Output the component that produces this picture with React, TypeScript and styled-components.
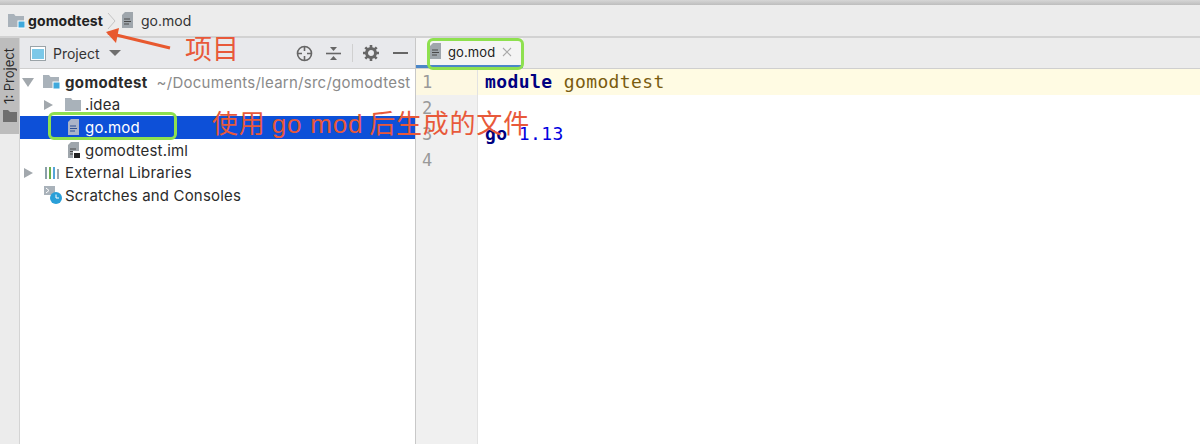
import React from "react";
import styled, { createGlobalStyle } from "styled-components";

const Global = createGlobalStyle`
  html, body { margin: 0; padding: 0; background: #fff; }
  #root { width: 1200px; height: 444px; overflow: hidden; }
`;
const UI = `"Inter", "Liberation Sans", "Noto Sans CJK SC", sans-serif`;
const MONO = `"DejaVu Sans Mono", "Liberation Mono", monospace`;

const Page = styled.div`
  position: relative; width: 1200px; height: 444px; overflow: hidden;
  display: flex; flex-direction: column; font-family: ${UI}; color: #222; background: #fff;
`;
const TopStrip = styled.div`
  height: 5px; flex: none; background: linear-gradient(#d6d6d6, #bdbdbd);
`;
const NavBar = styled.div`
  height: 33px; flex: none; box-sizing: border-box; padding-left: 8px; background: #ececec;
  border-bottom: 2px solid #d2d2d2; display: flex; align-items: center; font-size: 14px;
`;
const NavProject = styled.span`font-weight: 700; margin-left: 3px; letter-spacing: .1px;`;
const NavChevron = styled.svg`margin-left: 4px;`;
const NavFileIcon = styled.span`margin-left: 4px; display: flex;`;
const NavFile = styled.span`margin-left: 7px; color: #333;`;
const Body = styled.div`flex: 1; display: flex; min-height: 0;`;
const SideStrip = styled.div`
  width: 20px; flex: none; background: #ececec; border-right: 1px solid #d4d4d4; box-sizing: border-box;
`;
const SideTab = styled.div`
  height: 96px; background: #bdbdbd; display: flex; flex-direction: column; align-items: center; padding-top: 10px; box-sizing: border-box;
`;
const SideLabel = styled.span`
  writing-mode: vertical-rl; transform: rotate(180deg); font-size: 13px; color: #2a2a2a; line-height: 19px; white-space: nowrap;
`;
const SideIcon = styled.div`margin-top: 6px; height: 12px; display: flex;`;
const ProjectPanel = styled.div`
  width: 396px; flex: none; display: flex; flex-direction: column; border-right: 1px solid #c8c8c8; box-sizing: border-box;
`;
const PanelHeader = styled.div`
  height: 31px; flex: none; box-sizing: border-box; padding: 0 0 0 10px; display: flex; align-items: center;
  background: #e8e9ec; border-bottom: 1px solid #cfcfcf; font-size: 14px; color: #333;
`;
const PanelTitle = styled.span`margin-left: 7px; font-size: 14px;`;
const Caret = styled.span`
  margin-left: 9px; width: 0; height: 0; border-left: 6px solid transparent; border-right: 6px solid transparent; border-top: 6px solid #6e6e6e;
`;
const HeaderTools = styled.div`margin-left: auto; display: flex; align-items: center;`;
const ToolButton = styled.span<{ $w: number }>`width: ${(p) => p.$w}px; display: flex; justify-content: center; align-items: center;`;
const ToolDivider = styled.span`width: 1px; height: 18px; background: #d0d0d0; margin: 0 4px 0 2px;`;
const Tree = styled.div`padding-top: 2px; display: flex; flex-direction: column;`;
const Row = styled.div<{ $indent: number; $selected?: boolean }>`
  height: 22.6px; display: flex; align-items: center; font-size: 15px; white-space: nowrap;
  padding-left: ${(p) => p.$indent}px;
  background: ${(p) => (p.$selected ? "#0d50d8" : "transparent")};
  color: ${(p) => (p.$selected ? "#fff" : "#2b2b2b")};
`;
const Arrow = styled.span<{ $open?: boolean }>`
  width: 0; height: 0; flex: none;
  ${(p) => p.$open
    ? "border-left:6px solid transparent;border-right:6px solid transparent;border-top:9px solid #a2a8ad;margin-left:-2px;margin-right:9px;"
    : "border-top:5px solid transparent;border-bottom:5px solid transparent;border-left:9px solid #a2a8ad;margin-right:12px;"}
`;
const RowLabel = styled.span<{ $bold?: boolean; $gap?: number }>`
  margin-left: ${(p) => p.$gap ?? 3}px; font-weight: ${(p) => (p.$bold ? 700 : 400)}; letter-spacing: ${(p) => (p.$bold ? ".35px" : ".18px")};
`;
const RowHint = styled.span`margin-left: 9px; color: #8a8a8a; letter-spacing: .26px;`;
const Editor = styled.div`flex: 1; display: flex; flex-direction: column; min-width: 0;`;
const TabBar = styled.div`
  height: 31px; flex: none; box-sizing: border-box; background: #ececec; border-bottom: 1px solid #cfcfcf; display: flex;
`;
const Tab = styled.div`
  width: 107px; height: 30px; background: #f4f4f4; border-bottom: 3px solid #4a86c8; box-sizing: border-box; display: flex; align-items: center; font-size: 13px; padding-left: 13px; color: #222;
`;
const TabText = styled.span`margin-left: 6px; letter-spacing: .1px;`;
const Close = styled.span`display: flex; margin-left: 7px;`;
const Code = styled.div`flex: 1; display: flex; min-height: 0; font-family: ${MONO}; font-size: 18px; letter-spacing: .4px;`;
const Gutter = styled.div`
  width: 62px; flex: none; background: #f0f0f0; border-right: 1px solid #e2e2e2; box-sizing: border-box; color: #999; font-size: 17px; letter-spacing: 0;
`;
const GutterLine = styled.div<{ $active?: boolean }>`
  height: 26px; line-height: 26px; padding-left: 6px; background: ${(p) => (p.$active ? "#fdf8e2" : "transparent")};
`;
const Lines = styled.div`flex: 1;`;
const Line = styled.div<{ $active?: boolean }>`
  height: 26px; line-height: 26px; padding-left: 7px; white-space: pre; background: ${(p) => (p.$active ? "#fffbe3" : "transparent")};
`;
const Kw = styled.span`color: #000080; font-weight: 700;`;
const Mod = styled.span`color: #7a5c10;`;
const Num = styled.span`color: #0000e0;`;

const Note = styled.span<{ $x: number; $y: number; $size: number; $track?: number }>`
  position: absolute; left: ${(p) => p.$x}px; top: ${(p) => p.$y}px; font-size: ${(p) => p.$size}px;
  letter-spacing: ${(p) => p.$track ?? 0}px;
  line-height: 1; color: #e8593a; white-space: nowrap; font-family: "Liberation Sans", "Noto Sans CJK SC", sans-serif;
`;
const GreenBox = styled.div<{ $x: number; $y: number; $w: number; $h: number }>`
  position: absolute; left: ${(p) => p.$x}px; top: ${(p) => p.$y}px; width: ${(p) => p.$w}px; height: ${(p) => p.$h}px;
  box-sizing: border-box; border: 3px solid #8ee04f; border-radius: 6px;
`;
const ArrowOverlay = styled.svg`position: absolute; left: 100px; top: 25px;`;

const FolderIcon = ({ badge }: { badge?: boolean }) => (
  <svg width="17" height="16" viewBox="0 0 17 16">
    <path d="M0 1h6l1.5 2H16v11H0z" fill="#a9b2ba" />
    {badge && <rect x="10" y="8" width="7" height="7" fill="#3fa9dc" stroke="#fff" strokeWidth="1" />}
  </svg>
);
const FileIcon = ({ light, badge }: { light?: boolean; badge?: boolean }) => (
  <svg width="13" height="17" viewBox="0 0 13 17">
    <path d="M4 0h8v16H1V3z" fill={light ? "#aab4c8" : "#9fa6ac"} />
    <path d="M3 7h6M3 9.500h7M3 12h5" stroke={light ? "#2d4f92" : "#4a4a4a"} strokeWidth="1" />
    {badge && <><rect x="6" y="9" width="7" height="8" fill="#fff" /><rect x="7" y="11" width="6" height="5" fill="#222" /></>}
  </svg>
);

export default function App() {
  return (
    <Page>
      <Global />
      <TopStrip />
      <NavBar>
        <FolderIcon badge />
        <NavProject>gomodtest</NavProject>
        <NavChevron width="10" height="20" viewBox="0 0 10 20">
          <path d="M1 2l7 8-7 8" fill="none" stroke="#c4c4c4" />
        </NavChevron>
        <NavFileIcon><FileIcon /></NavFileIcon>
        <NavFile>go.mod</NavFile>
      </NavBar>
      <Body>
        <SideStrip>
          <SideTab>
            <SideLabel>1: Project</SideLabel>
            <SideIcon>
              <svg width="14" height="12" viewBox="0 0 14 12"><path d="M0 0h5l2 2h7v10H0z" fill="#6e6e6e" /></svg>
            </SideIcon>
          </SideTab>
        </SideStrip>
        <ProjectPanel>
          <PanelHeader>
            <svg width="16" height="15" viewBox="0 0 16 15">
              <rect x=".5" y=".5" width="15" height="14" fill="#fff" stroke="#9aa3a8" />
              <rect x="2" y="3" width="12" height="10" fill="#7cc8e8" />
            </svg>
            <PanelTitle>Project</PanelTitle>
            <Caret />
            <HeaderTools>
              <ToolButton $w={24}>
                <svg width="17" height="17" viewBox="0 0 17 17" fill="none" stroke="#666" strokeWidth="1.6">
                  <circle cx="8.5" cy="8.5" r="7" /><path d="M8.5 1v5M8.5 11v5M1 8.5h5M11 8.5h5" />
                </svg>
              </ToolButton>
              <ToolButton $w={34}>
                <svg width="15" height="15" viewBox="0 0 15 15" fill="#666">
                  <rect y="6.700" width="15" height="1.600" /><path d="M4 1h7L7.500 5zM4 14h7l-3.500-4z" />
                </svg>
              </ToolButton>
              <ToolDivider />
              <ToolButton $w={28}>
                <svg width="16" height="16" viewBox="0 0 16 16">
                  <circle cx="8" cy="8" r="4.500" fill="none" stroke="#666" strokeWidth="3" />
                  <path d="M8 0v3M8 13v3M0 8h3M13 8h3M2.300 2.300l2.100 2.100M11.600 11.600l2.100 2.100M2.300 13.700l2.100-2.100M11.600 4.400l2.100-2.100" stroke="#666" strokeWidth="2.600" />
                </svg>
              </ToolButton>
              <ToolButton $w={30}>
                <svg width="15" height="2" viewBox="0 0 15 2"><rect width="15" height="2" fill="#666" /></svg>
              </ToolButton>
            </HeaderTools>
          </PanelHeader>
          <Tree>
            <Row $indent={4}><Arrow $open /><FolderIcon badge /><RowLabel $bold $gap={5}>gomodtest</RowLabel><RowHint>~/Documents/learn/src/gomodtest</RowHint></Row>
            <Row $indent={24}><Arrow /><FolderIcon /><RowLabel>.idea</RowLabel></Row>
            <Row $indent={47} $selected><FileIcon light /><RowLabel $gap={5}>go.mod</RowLabel></Row>
            <Row $indent={47}><FileIcon badge /><RowLabel $gap={5}>gomodtest.iml</RowLabel></Row>
            <Row $indent={4}>
              <Arrow />
              <svg width="16" height="14" viewBox="0 0 16 14">
                <path d="M1 1v12" stroke="#8aa0a8" strokeWidth="2" /><path d="M5 1v12" stroke="#6ab04c" strokeWidth="2" /><path d="M9 1v12" stroke="#55a5d8" strokeWidth="2" /><path d="M13 3v10" stroke="#a0a8b0" strokeWidth="2" />
              </svg>
              <RowLabel $gap={4}>External Libraries</RowLabel>
            </Row>
            <Row $indent={24}>
              <svg width="18" height="18" viewBox="0 0 18 18">
                <rect y="0" width="11" height="9" fill="#a9b2ba" /><path d="M2 2l3 2.500-3 2.500" stroke="#fff" fill="none" />
                <circle cx="12" cy="12" r="6" fill="#2a9fd8" /><path d="M12 8.500V12h3" stroke="#fff" fill="none" />
              </svg>
              <RowLabel>Scratches and Consoles</RowLabel>
            </Row>
          </Tree>
        </ProjectPanel>
        <Editor>
          <TabBar>
            <Tab>
              <FileIcon />
              <TabText>go.mod</TabText>
              <Close>
                <svg width="10" height="10" viewBox="0 0 10 10"><path d="M1 1l8 8M9 1l-8 8" stroke="#aaa" strokeWidth="1.100" /></svg>
              </Close>
            </Tab>
          </TabBar>
          <Code>
            <Gutter>
              <GutterLine $active>1</GutterLine>
              <GutterLine>2</GutterLine>
              <GutterLine>3</GutterLine>
              <GutterLine>4</GutterLine>
            </Gutter>
            <Lines>
              <Line $active><Kw>module</Kw> <Mod>gomodtest</Mod></Line>
              <Line />
              <Line><Kw>go</Kw> <Num>1.13</Num></Line>
            </Lines>
          </Code>
        </Editor>
      </Body>
      <ArrowOverlay width="80" height="30" viewBox="0 0 80 30">
        <path d="M8 8L70 23" stroke="#e8592f" strokeWidth="3" />
        <path d="M6 7l13-4-3 15z" fill="#e8592f" />
      </ArrowOverlay>
      <Note $x={185} $y={37} $size={27}>项目</Note>
      <Note $x={212} $y={111} $size={26} $track={0.8}>使用{"\u2009"}go mod{"\u2009"}后生成的文件</Note>
      <GreenBox $x={48} $y={112} $w={129} $h={28} />
      <GreenBox $x={427} $y={38} $w={97} $h={32} />
    </Page>
  );
}
